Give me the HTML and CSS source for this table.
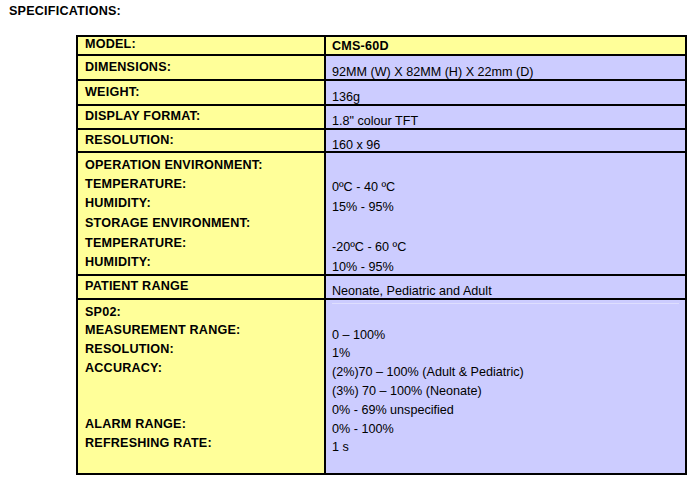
FILE: index.html
```html
<!DOCTYPE html>
<html lang="en">
<head>
<meta charset="utf-8">
<title>Specifications</title>
<link rel="stylesheet" href="styles.css">
</head>
<body>
<h1 class="title">SPECIFICATIONS:</h1>
<div class="spec">
  <div class="row r-model">
    <div class="lab">MODEL:</div>
    <div class="val model">CMS-60D</div>
  </div>
  <div class="row r-dim">
    <div class="lab">DIMENSIONS:</div>
    <div class="val">92MM (W) X 82MM (H) X 22mm (D)</div>
  </div>
  <div class="row r-weight">
    <div class="lab">WEIGHT:</div>
    <div class="val">136g</div>
  </div>
  <div class="row r-disp">
    <div class="lab">DISPLAY FORMAT:</div>
    <div class="val">1.8" colour TFT</div>
  </div>
  <div class="row r-res">
    <div class="lab">RESOLUTION:</div>
    <div class="val">160 x 96</div>
  </div>
  <div class="row r-env">
    <div class="lab">
      <div class="blk">
        <div>OPERATION ENVIRONMENT:</div>
        <div>TEMPERATURE:</div>
        <div>HUMIDITY:</div>
      </div>
      <div class="blk blk2">
        <div>STORAGE ENVIRONMENT:</div>
        <div>TEMPERATURE:</div>
        <div>HUMIDITY:</div>
      </div>
    </div>
    <div class="val">
      <div class="blk">
        <div>&nbsp;</div>
        <div>0ºC - 40 ºC</div>
        <div>15% - 95%</div>
      </div>
      <div class="blk blk2">
        <div>&nbsp;</div>
        <div>-20ºC - 60 ºC</div>
        <div>10% - 95%</div>
      </div>
    </div>
  </div>
  <div class="row r-pat">
    <div class="lab">PATIENT RANGE</div>
    <div class="val">Neonate, Pediatric and Adult</div>
  </div>
  <div class="row r-sp">
    <div class="lab">
      <div>SP02:</div>
      <div>MEASUREMENT RANGE:</div>
      <div>RESOLUTION:</div>
      <div>ACCURACY:</div>
      <div>&nbsp;</div>
      <div>&nbsp;</div>
      <div>ALARM RANGE:</div>
      <div>REFRESHING RATE:</div>
    </div>
    <div class="val">
      <div class="sheen"></div>
      <div class="lines">
        <div>&nbsp;</div>
        <div>0 – 100%</div>
        <div>1%</div>
        <div>(2%)70 – 100% (Adult &amp; Pediatric)</div>
        <div>(3%) 70 – 100% (Neonate)</div>
        <div>0% - 69% unspecified</div>
        <div>0% - 100%</div>
        <div>1 s</div>
      </div>
    </div>
  </div>
</div>
</body>
</html>
```
FILE: styles.css
```css
html, body {
  margin: 0;
  background: #ffffff;
}

body {
  font-family: "Liberation Sans", Arial, Helvetica, sans-serif;
  font-size: 12.6px;
  color: #000000;
}

.title {
  margin: 0;
  padding: 4px 0 0 9px;
  font-size: 12.6px;
  line-height: 15px;
  font-weight: bold;
  letter-spacing: 0.2px;
}

.spec {
  margin: 16px 0 0 76px;
  width: 611px;
  box-sizing: border-box;
  border: 2px solid #000000;
}

.row {
  display: grid;
  grid-template-columns: 248px 1fr;
  grid-template-rows: minmax(0, 1fr);
  border-top: 2px solid #000000;
}

.row:first-child {
  border-top: 0;
}

.lab {
  box-sizing: border-box;
  background: #ffff99;
  border-right: 2px solid #000000;
  padding-left: 7px;
  font-weight: bold;
  letter-spacing: 0.2px;
  line-height: 12px;
  white-space: nowrap;
}

.val {
  box-sizing: border-box;
  background: #ccccff;
  padding-left: 6px;
  line-height: 12px;
  white-space: nowrap;
}

.val.model {
  background: #ffff99;
  font-weight: bold;
  letter-spacing: 0.2px;
}

/* single-line rows */
.r-model { height: 17px; }
.r-model .lab { padding-top: 0.6px; }
.r-model .val { padding-top: 2.6px; }

.r-dim { height: 23px; }
.r-dim .lab { padding-top: 4.6px; }
.r-dim .val { padding-top: 9.6px; }

.r-weight { height: 23px; }
.r-weight .lab { padding-top: 4.6px; }
.r-weight .val { padding-top: 10px; }

.r-disp { height: 22px; }
.r-disp .lab { padding-top: 4.1px; }
.r-disp .val { padding-top: 9.1px; }

.r-res { height: 21px; }
.r-res .lab { padding-top: 3.6px; }
.r-res .val { padding-top: 8.6px; }

.r-pat { height: 22px; }
.r-pat .lab { padding-top: 4.1px; }
.r-pat .val { padding-top: 8.8px; }

/* environment row */
.r-env { height: 121px; }
.r-env .lab,
.r-env .val { line-height: 19.3px; }
.r-env .lab { padding-top: 2.5px; }
.r-env .lab .blk2 { margin-top: 1.1px; }
.r-env .val { padding-top: 6.2px; }
.r-env .val .blk2 { margin-top: 2.1px; }

/* SP02 row */
.r-sp { height: 173px; }
.r-sp .lab,
.r-sp .val { line-height: 18.8px; }
.r-sp .lab { padding-top: 2.7px; }

.sheen {
  margin: 3px 6px 0 0;
  height: 0;
  border-top: 1px solid #dedeff;
}

.r-sp .val .lines { padding-top: 2.8px; }
```
